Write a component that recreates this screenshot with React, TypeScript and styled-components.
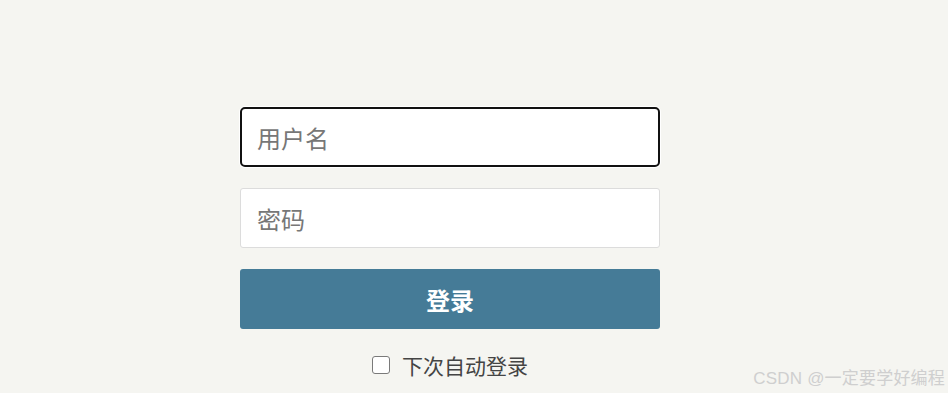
import React from "react";
import styled, { createGlobalStyle } from "styled-components";

const GlobalStyle = createGlobalStyle`
  html, body {
    margin: 0;
    padding: 0;
    background: #f5f5f1;
  }
  body {
    font-family: "Noto Sans CJK SC", "Noto Sans", sans-serif;
  }
`;

const Page = styled.div`
  position: relative;
  width: 948px;
  height: 393px;
  overflow: hidden;
  box-sizing: border-box;
  padding: 107px 0 0 240px;
`;

const Form = styled.form`
  width: 420px;
  display: flex;
  flex-direction: column;
  gap: 21px;
`;

const Field = styled.input`
  box-sizing: border-box;
  width: 100%;
  height: 60px;
  padding: 0 16px;
  border: 1px solid #dcdcdc;
  border-radius: 3px;
  background: #ffffff;
  font-family: "Noto Sans CJK SC", sans-serif;
  font-size: 24px;
  color: #333;
  caret-color: #000;
  outline: none;

  &::placeholder {
    color: #777;
  }

  &:focus {
    border: 2px solid #111;
    border-radius: 5px;
    padding: 0 15px;
    box-shadow: 0 0 0 1px #ffffff;
  }
`;

const SubmitButton = styled.button`
  height: 60px;
  width: 100%;
  border: none;
  border-radius: 3px;
  background: #457b97;
  color: #ffffff;
  font-family: "Noto Sans CJK SC", sans-serif;
  font-size: 24px;
  font-weight: 700;
  cursor: pointer;
`;

const RememberRow = styled.label`
  display: flex;
  align-items: center;
  justify-content: center;
  gap: 12px;
  height: 30px;
  font-size: 21px;
  color: #444;
`;

const Check = styled.input`
  appearance: none;
  margin: 0;
  width: 18px;
  height: 18px;
  border: 1.5px solid #7a7a7a;
  border-radius: 3px;
  background: #fff;
  box-sizing: border-box;
`;

const Watermark = styled.div`
  position: absolute;
  right: 3px;
  bottom: 4px;
  font-family: "Liberation Sans", "Noto Sans CJK SC", sans-serif;
  font-size: 17px;
  color: #cfcfcf;
  letter-spacing: 0.2px;
`;

export default function App() {
  return (
    <>
      <GlobalStyle />
      <Page>
        <Form onSubmit={(e) => e.preventDefault()}>
          <Field type="text" placeholder="用户名" autoFocus />
          <Field type="password" placeholder="密码" />
          <SubmitButton type="submit">登录</SubmitButton>
          <RememberRow>
            <Check type="checkbox" />
            下次自动登录
          </RememberRow>
        </Form>
        <Watermark>CSDN @一定要学好编程</Watermark>
      </Page>
    </>
  );
}
